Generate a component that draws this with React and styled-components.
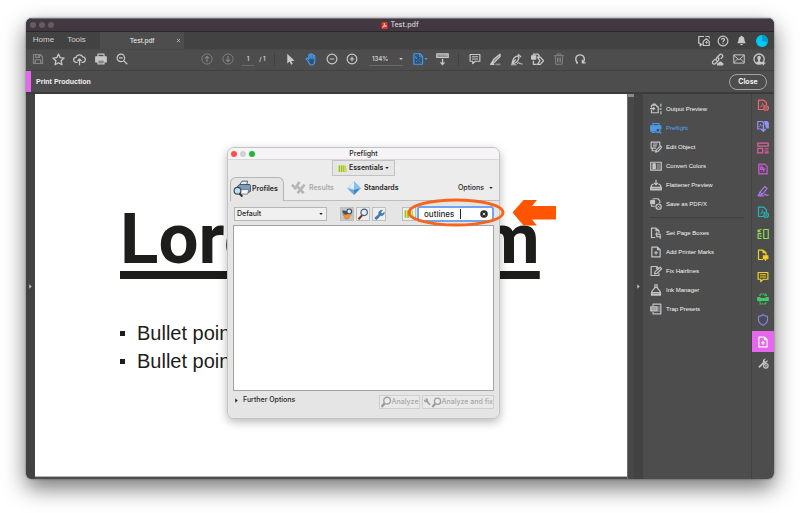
import React from "react";
import styled, { createGlobalStyle, css } from "styled-components";

const GlobalStyle = createGlobalStyle`
  *, *::before, *::after { box-sizing: border-box; }
  body { margin: 0; background: #fff; }
  button, input, select { font: inherit; color: inherit; margin: 0; }
  h1, h2, p, ul { margin: 0; padding: 0; }
`;

const sans = `"Liberation Sans", Arial, sans-serif`;
const ui = `Inter, "Liberation Sans", sans-serif`;

/* ---------- icons ---------- */

const Svg = styled.svg`
  display: block;
  flex: none;
  width: ${(p) => p.$size || 13}px;
  height: ${(p) => p.$size || 13}px;
  fill: none;
  stroke: currentColor;
  stroke-width: 1.6;
  stroke-linejoin: round;
`;

const pdfMark = <path d="M4.5 10.5c2-1 3-4 2.5-5.500c-.5-1 1.500 4 3.500 4c-2-.4-4 .3-6 1.500z" strokeWidth="0.9" />;
const plusBadge = (
  <>
    <circle cx="12.200" cy="12" r="3" />
    <path d="M10.800 12h2.800M12.200 10.600v2.800" strokeWidth="1" />
  </>
);

const shapes = {
  save: <path d="M2 2h9l3 3v9H2zM5 2v4h5V2M4.500 14V9h7v5M8.500 3v2" />,
  star: <path d="M8 1.300l2 4.500 4.900.5-3.700 3.300 1.100 4.900L8 12l-4.300 2.500 1.100-4.900L1.100 6.300 6 5.800z" />,
  cloud: <path d="M5.500 11.500H4a3 3 0 0 1-.3-6A4.500 4.500 0 0 1 12 4.800a3.400 3.400 0 0 1 .5 6.700h-2M8 15V7.500M5.500 9.800L8 7.300l2.500 2.500" />,
  print: (
    <>
      <path d="M4 5V1.500h8V5" />
      <path d="M1 5h14v7h-2.500V9.500h-9V12H1z" fill="currentColor" />
      <path d="M4 10v4.500h8V10M5.500 12h5" />
    </>
  ),
  zoomOut: <><circle cx="6.500" cy="6.500" r="5" /><path d="M10.200 10.200L15 15M4 6.500h5" strokeWidth="1.700" /></>,
  up: <><circle cx="8" cy="8" r="6.800" strokeWidth="1.200" /><path d="M8 12V4.500M5.200 7.200L8 4.400l2.800 2.800" /></>,
  down: <><circle cx="8" cy="8" r="6.800" strokeWidth="1.200" /><path d="M8 4v7.500M5.200 8.800L8 11.600l2.800-2.800" /></>,
  pointer: <path d="M4 1v12l3-2.500 1.800 4 2-1-1.700-3.800L13 9.500z" fill="currentColor" stroke="none" />,
  hand: (
    <path
      d="M4 10.500L1.700 7.800c-.9-1.200.6-2.100 1.500-1.200L4.600 8V3c0-1.400 1.800-1.400 1.800 0v3.500V2c0-1.400 1.900-1.400 1.900 0v4.500V2.500c0-1.400 1.900-1.400 1.900 0v4.500V4c0-1.300 1.900-1.300 1.900 0v5.500c0 3.500-1.500 5.200-4.500 5.200c-2 0-2.700-1.700-3.600-4.200z"
      fill="#2b5580"
      strokeWidth="1.300"
    />
  ),
  minus: <><circle cx="8" cy="8" r="6.500" /><path d="M5 8h6" strokeWidth="1.600" /></>,
  plus: <><circle cx="8" cy="8" r="6.500" /><path d="M5 8h6M8 5v6" strokeWidth="1.600" /></>,
  fitPage: (
    <>
      <path d="M2.500 1h8l3.500 3.500V15H2.500z" fill="#2d4f72" />
      <path d="M10 1v4h4M5 6.500l2 1.500M11 8l-2 .5M5.500 12l2-2M11.500 12.500l-2-1.500M5 4v2.500h2" strokeWidth="1.100" />
    </>
  ),
  ruler: (
    <>
      <path d="M1 1h14v4.500H1z" fill="currentColor" fillOpacity="0.350" />
      <path d="M3.500 1.500V4M6 1.500V4M8.500 1.500V4M11 1.500V4M13 1.500V4" strokeWidth="1" />
      <path d="M8 7v7.500M5.500 11.500L8 14.300l2.500-2.800" />
    </>
  ),
  comment: <path d="M1.500 2h13v9H8.500L5 14.200V11H1.500zM4 5h8M4 8h8" />,
  highlight: (
    <>
      <path d="M13.500 1.500L5.500 8 4.300 11l2.300.5L13.800 4z" fill="currentColor" fillOpacity="0.500" />
      <path d="M4 11l-2 3h4z" fill="currentColor" />
      <path d="M8 14h6" strokeWidth="2" opacity="0.500" />
    </>
  ),
  sign: (
    <>
      <path d="M10 1.500l3.500 3.500M9.500 3.500C5 4.500 4 7 2.500 13c4 0 7-1.500 8.500-7zM2.500 13l4.500-5" />
      <path d="M9 13.500c1.500-3 2-3 2.300 0c1-2 1.500-1 1.700 0h2.500M1 14.500h7" strokeWidth="1.200" />
    </>
  ),
  share: (
    <>
      <path d="M3 3V1.500h5.500L10 3v2.500M3 9.500V14h4" />
      <path d="M8 5h3.500l4 4.500-4 4.500H8l3-4.500z" />
      <path d="M0.800 3.500h5v4h-5z" fill="currentColor" />
    </>
  ),
  trash: <path d="M1.500 3.500h13M5.500 3V1.300h5V3M3 4l.7 11h8.600L13 4M6 6v6.500M8 6v6.500M10 6v6.500" strokeWidth="1.300" />,
  rotate: <path d="M5 13.500C0 9 2.500 2.500 8 2.500s8 6.500 3.500 10.500M11.200 9v4.300h4.300M3 13.500h2" strokeWidth="1.700" />,
  bubbleUp: (
    <>
      <path d="M8 2H1v9h2v3.500L6 11.500" />
      <path d="M7 8.500L11 5l4 3.500v5.500H7z" />
      <path d="M9.500 10.500l2-2 2 2M11.500 8.500V12M10 2h5v3" strokeWidth="1.200" />
    </>
  ),
  help: <><circle cx="8" cy="8" r="6.500" /><path d="M6 6.300c.1-2.600 4-2.400 4 0c0 1.500-2 1.500-2 3.200M8 11v1.400" strokeWidth="1.600" /></>,
  bell: <path d="M8 1c.8 0 1.300.5 1.300 1.200C11.500 3 12.300 5 12.300 7c0 3 1.700 3.500 1.700 5H2c0-1.500 1.700-2 1.700-5c0-2 .8-4 3-4.800C6.700 1.500 7.200 1 8 1zM6 13h4a2 2 0 0 1-4 0z" fill="currentColor" stroke="none" />,
  link: (
    <>
      <path d="M7 9.500c-1-1-1-2.200 0-3.300l3.500-4c2-2 5 .6 3.500 2.800L12 7.300M8.500 5.500c1.500 1 1.500 2.500.5 3.700L5.500 13c-2 1.800-4.600-.5-3.200-2.700L5 7.500" />
      <path d="M8 14.500c0-2 1.500-2 2-2c.5-2 3-1.500 3 0c2 0 2 2 1 2z" fill="currentColor" />
    </>
  ),
  mail: <path d="M1 2.500h14v11H1zM1 3l7 6 7-6M1 13l5-5M15 13l-5-5" strokeWidth="1.300" />,
  user: (
    <>
      <circle cx="7.500" cy="7.500" r="6.300" />
      <path d="M7.500 3.500c2.800 0 2.500 4.200 1 5.500l.3 1.500 2.200 1-1 2H5l-1-2 2.200-1 .3-1.500C5 7.700 4.700 3.500 7.500 3.500z" fill="currentColor" stroke="none" />
      <path d="M12.800 10v5M10.300 12.500h5" strokeWidth="1.700" />
    </>
  ),
  output: (
    <>
      <path d="M2 6V3h7v2h2v8H2V9M4 3V1.500h3V3" />
      <path d="M0 7.500h6M4 5.500l2.200 2L4 9.500M14.500 1v4M14.500 7v2M14.500 11v4M12.500 8h2" />
    </>
  ),
  preflight: (
    <>
      <path d="M4 5V2h8v3" />
      <path d="M1 5h13.500v4H9l-2 3H1z" fill="currentColor" />
      <circle cx="10.500" cy="11" r="2.700" fill="#4d4d4d" />
      <path d="M12.500 13l2.500 2.300M3 12v2h4" />
    </>
  ),
  editObject: <path d="M13 6V1.500H1.500v8H8M4 4h6M4 6.500h5M3 9.500V13h5M7.500 14.800l1-3L14 6.500l1.500 2L10.500 14z" />,
  convert: (
    <>
      <path d="M1 3h14v10.500H1z" />
      <path d="M4 5h3v6.500H4z" fill="currentColor" />
      <path d="M9 4.500h4.500v7.500H9z" fill="currentColor" fillOpacity="0.450" stroke="none" />
    </>
  ),
  flatten: (
    <>
      <path d="M5 7H3l-2 4v3.500h14V11l-2-4h-2M1 11h14M8 1v6.500M5.500 5.200L8 7.700l2.500-2.500" />
      <path d="M1.500 11.500h13v2.500h-13z" fill="currentColor" fillOpacity="0.500" />
    </>
  ),
  savePdf: (
    <>
      <path d="M4 2V1h6.500L13 3.500V7M2 9v2h5M1 3.500h5v4H1z" />
      <path d="M1.500 4h4v3h-4z" fill="currentColor" />
      <circle cx="11.500" cy="11.500" r="3.500" />
      <path d="M10 10l3 3M13 10l-3 3" strokeWidth="1" />
    </>
  ),
  pageBoxes: <path d="M7 14H2V1.500h6L12 5v3M8 1.500V5h4M9 7v6h6M7 9.500h6.500V15.500" />,
  pageAdd: <path d="M2.500 1.500h7.500L13.500 5v9.500h-11zM10 1.500V5h3.500M8 6.500v5M5.500 9h5" />,
  hairlines: <path d="M9 14H1.500V2H9l3 3M9 2v3.500M6 12l1-3.500L14 3l1.500 2-6 6zM12 11v3H9" />,
  ink: (
    <>
      <path d="M6.500 1h3v3.500h-3zM6.500 4.500C6 7 2 8.500 2 11.500V15h12v-3.500C14 8.500 10 7 9.500 4.500" />
      <path d="M2.500 11.500h11V14h-11z" fill="currentColor" fillOpacity="0.500" />
    </>
  ),
  trap: (
    <>
      <path d="M4 4V1.500h10.500v13H4V12" />
      <path d="M1 5h8.500v5.500H1z" fill="currentColor" fillOpacity="0.700" />
      <path d="M12 4v8" strokeWidth="1" />
    </>
  ),
  pdfAdd: <><path d="M9 14H2V1.500h7L12.500 5v3" />{pdfMark}{plusBadge}</>,
  pdfExport: (
    <>
      <path d="M5.500 12H1V2h6l2 2v3" />
      <path d="M2.500 9.500c2-1 2.500-3 2-4.500c.5 2 1.500 3 3 3" strokeWidth="1" />
      <path d="M9.500 2h3.500l2 2v6.500h-3" fill="currentColor" />
      <path d="M8.500 6v8.500M5.500 12l3 3 3-3" strokeWidth="2" />
    </>
  ),
  organize: <path d="M1 1.500h14v4H1zM1 8.500h6.500v6H1zM10 9h5.500M10 12h5.500M10 14.500h5.500" />,
  fileOcr: <path d="M2.500 1.500h8l3 3v10h-11zM5 6h3v2.500H5zM9 11.500V8h2.500M6 11.500h.5M4.500 4h3" />,
  signPen: <path d="M1.500 14.500l2.500-5L10.500 2l3 2.500L7.500 12zM1.500 14.500h8M4 9.500l3 2.500M10 13.500c1-2 2-2 2.300 0h3.200" />,
  compare: <path d="M9 2h6v12H9zM6 7.500H1.500v6.500H6M3.500 10.700H6M1 5l4-3.500M1.500 2v3H5M6 2h1" />,
  protect: (
    <>
      <path d="M8 14H2V1.500h6L12 5v3M8 1.500V5h4" />
      <path d="M8.500 9h6v4h-3v2l-1.500-2H8.500z" fill="currentColor" />
    </>
  ),
  scan: (
    <>
      <path d="M4 4V1.500h5L11 4M10 1.500h2.500v3M4 11v3.500h8V11" strokeDasharray="2 1" />
      <path d="M1 10V6h3v1.500h8V6h3v4z" fill="currentColor" />
    </>
  ),
  shield: <path d="M8 1c2 1.500 4 2 6 2v4.500c0 3.500-3 5.800-6 7.500c-3-1.700-6-4-6-7.500V3c2 0 4-.5 6-2z" />,
  tools: (
    <>
      <path d="M2 12.500L8 7c-1-3 1.500-5.500 4-5L10 4l.5 1.500L12 6l2-2c1 2-1 4.500-3.500 4L4 14c-1 1-3-.5-2-1.500z" fill="currentColor" stroke="none" />
      <circle cx="11.800" cy="11.800" r="3" />
      <path d="M11.800 10.300v3M10.300 11.800h3" strokeWidth="1" />
    </>
  ),
  caret: <path d="M1 4h14l-7 8z" fill="currentColor" stroke="none" />,
  caretRight: <path d="M4 1l8 7-8 7z" fill="currentColor" stroke="none" />,
  close: <path d="M3 3l10 10M13 3L3 13" strokeWidth="2.500" />,
  avatar: (
    <>
      <circle cx="8" cy="8" r="8" fill="#00c8fa" stroke="none" />
      <path d="M8 0a8 8 0 0 1 7.700 10L8 8z" fill="#009fc9" stroke="none" />
    </>
  ),
  acrobat: (
    <>
      <rect x="1" y="0" width="14" height="16" rx="2" fill="#e3322b" stroke="none" />
      <path d="M3.500 12c3-1.500 5-5 4-9c0 4 2 6.500 5 6.500c-3-.5-6 .5-9 2.500z" stroke="#fff" />
    </>
  ),
  library: (
    <g stroke="none">
      <path d="M1 2h3v12H1zM5 2h3v12H5zM9 2h2.500v12H9z" fill="#a0cc10" />
      <path d="M12 3L14 2l1.500 12H13z" fill="#b4d83c" />
    </g>
  ),
  clear: <><circle cx="8" cy="8" r="7.500" fill="#2a2a2a" stroke="none" /><path d="M5.300 5.300l5.400 5.400M10.700 5.300l-5.400 5.400" stroke="#fff" strokeWidth="1.700" /></>,
  profiles: (
    <>
      <path d="M6 4l2-3h5l-1 4" fill="#dceafb" stroke="#45586b" strokeWidth="0.800" />
      <path d="M4 5.500L6 4h9l.7 1.500V10L14 11H5z" fill="#7f9bb8" stroke="#3c4a58" strokeWidth="0.800" />
      <path d="M6 8.500h8l-1 4H6z" fill="#f4f8fc" stroke="#5b6b7a" strokeWidth="0.700" />
      <circle cx="4" cy="9.500" r="3" fill="#b9e0fa" stroke="#444" strokeWidth="1" />
      <path d="M5.800 12l2.500 2.800" stroke="#333" strokeWidth="1.800" />
    </>
  ),
  results: (
    <g stroke="#b5b5b5" strokeWidth="2.800" fill="none">
      <path d="M1 5l3.500 4L9 2" />
      <path d="M7 7l6.500 7M14.500 5L7 14" />
    </g>
  ),
  standards: (
    <g stroke="none">
      <path d="M8 0L0 8l8 2z" fill="#c6e4f8" />
      <path d="M8 0l8 8-8 2z" fill="#86c0ec" />
      <path d="M0 8l8 8v-6z" fill="#6faade" />
      <path d="M16 8l-8 8v-6z" fill="#3f86c4" />
      <path d="M8 1.500L3.500 7 8 8z" fill="#e6f5ff" />
    </g>
  ),
  hands: (
    <>
      <path d="M2 3l5 1 2 4-3 2-4-4z" fill="#414f66" stroke="none" />
      <circle cx="11" cy="4.500" r="3.200" fill="#cfe6fb" stroke="#3a506a" />
      <path d="M2.500 8l4 1 6-1.500L13.500 9 9.500 14.500H6z" fill="#f0943a" stroke="#b2621b" strokeWidth="0.600" />
    </>
  ),
  loupe: (
    <>
      <path d="M7 9.500L2 15" stroke="#7d3328" strokeWidth="2.800" />
      <circle cx="9.500" cy="5.800" r="4.300" fill="#d9effe" stroke="#4a5d70" strokeWidth="1.600" />
    </>
  ),
  wrench: <path d="M1.500 12.500L7 7.500C6 4 9 1 12.500 1.800L10 4.500l.5 1.800 2 .6L15 4.500c.7 3.500-2.500 6-5.500 5L4.500 14.800c-1.500 1.200-4-.9-3-2.300z" fill="#3c7dbb" stroke="#2c5c91" strokeWidth="0.600" />,
  grayLoupe: <><path d="M6.500 9.500L2 14.500" stroke="#9b9b9b" strokeWidth="3" /><circle cx="9.500" cy="6.200" r="4.500" fill="#ececec" stroke="#a0a0a0" strokeWidth="2" /></>,
  grayWrench: <path d="M2 2.500L4.500 5 6 3.500 4.500 1C9-.5 11 3 9.700 6l5 6c1 1.500-1 3-2.300 2L7 8.500C4 9.500 1 6 2 2.500z" fill="#9f9f9f" stroke="none" />,
};

function Icon({ name, size }) {
  return (
    <Svg viewBox="0 0 16 16" $size={size} aria-hidden="true">
      {shapes[name]}
    </Svg>
  );
}

/* ---------- application window ---------- */

const Desktop = styled.div`
  display: flex;
  min-height: 100vh;
  padding: 18px 26px 34px;
  font-family: ${sans};
`;

const AppWindow = styled.div`
  flex: 1;
  min-width: 0;
  display: flex;
  flex-direction: column;
  overflow: hidden;
  border-radius: 6px;
  background: #4d4d4d;
  color: #d0d0d0;
`;

const WindowShadow = styled.div`
  flex: 1;
  min-width: 0;
  display: flex;
  border-radius: 6px;
  box-shadow: 0 9px 22px rgba(0, 0, 0, 0.55), 0 0 2px rgba(0, 0, 0, 0.5);
`;

const TitleBar = styled.header`
  display: grid;
  grid-template-columns: 1fr auto 1fr;
  align-items: center;
  height: 14px;
  padding: 0 4px;
  background: #413841;
  border-top: 1px solid #777277;
  border-bottom: 1px solid #292529;
  font: 600 7px/12px ${ui};
  color: #c6c2c6;
`;

const Lights = styled.div`
  display: flex;
  gap: 3px;
`;

const Light = styled.span`
  width: 6px;
  height: 6px;
  border-radius: 50%;
  background: ${(p) => p.$color};
`;

const DocTitle = styled.div`
  display: flex;
  align-items: center;
  gap: 2px;
`;

const TabBar = styled.nav`
  display: flex;
  height: 17px;
  background: #424242;
  font-size: 8px;
`;

const NavTab = styled.button`
  width: ${(p) => p.$width}px;
  padding: 0 0 2px;
  border: 0;
  background: none;
  text-align: center;
`;

const FileTab = styled.div`
  display: grid;
  grid-template-columns: 1fr auto;
  align-items: center;
  width: 84px;
  margin-left: 8px;
  background: #4d4d4d;
  color: #f0f0f0;
  font-size: 7px;
  text-align: center;
`;

const TabLabel = styled.span`
  padding-left: 12px;
`;

const IconButton = styled.button`
  display: inline-flex;
  align-items: center;
  justify-content: center;
  flex: none;
  width: ${(p) => p.$width || 21}px;
  height: 100%;
  padding: 0;
  border: 0;
  background: none;
  color: ${(p) => (p.$tone === "blue" ? "#4a9bea" : p.$tone === "dim" ? "#858585" : "#c8c8c8")};
`;

const PushRight = styled.div`
  display: flex;
  align-items: center;
  margin-left: auto;
  padding-right: 2px;
`;

const Toolbar = styled.div`
  display: flex;
  align-items: center;
  height: 22px;
  padding: 0 2px 2px 1px;
  border-top: 1px solid #484848;
  border-bottom: 1px solid #424242;
  font: 600 7px/10px ${ui};
`;

const Group = styled.div`
  display: flex;
  align-items: center;
  height: 18px;
  margin-left: ${(p) => p.$gap || 0}px;
`;

const Divider = styled.span`
  width: 1px;
  height: 13px;
  margin: 0 5px;
  background: #414141;
`;

const PageInput = styled.input`
  width: 12px;
  height: 13px;
  margin: 0 2px 0 4px;
  padding: 0;
  border: 0;
  border-bottom: 1px solid #686868;
  background: none;
  font-size: 6px;
  text-align: center;
`;

const PageCount = styled.span`
  width: 13px;
  font-size: 6px;
  text-align: center;
`;

const ZoomField = styled.label`
  display: flex;
  align-items: center;
  width: 34px;
  margin: 0 5px 0 7px;
  padding-left: 3px;
  border-bottom: 1px solid #686868;
  font-size: 6px;
`;

const PlainSelect = styled.select`
  flex: 1;
  min-width: 0;
  height: 13px;
  padding: 0;
  border: 0;
  background: none;
  appearance: none;
  outline: none;
`;

const ToolHeader = styled.div`
  display: flex;
  align-items: center;
  height: 23px;
  padding-right: 7px;
  border-bottom: 2px solid #3b3b3b;
  &::before {
    content: "";
    align-self: stretch;
    width: 5px;
    margin-right: 5px;
    background: #e667ee;
  }
`;

const ToolTitle = styled.h2`
  flex: 1;
  font: bold 7px/10px ${sans};
  color: #f0f0f0;
`;

const CloseButton = styled.button`
  width: 38px;
  height: 16px;
  padding: 0;
  border: 1px solid #a4a4a4;
  border-radius: 8px;
  background: none;
  color: #f0f0f0;
  font: bold 7px/10px ${ui};
`;

const Body = styled.div`
  flex: 1;
  display: flex;
`;

const Gutter = styled.button`
  display: flex;
  align-items: center;
  justify-content: center;
  flex: none;
  width: 9px;
  padding: 0;
  border: 0;
  background: #424242;
  color: #c0c0c0;
`;

const Scrollbar = styled.div`
  flex: none;
  width: 7px;
  background: #474747;
  border-left: 1px solid #6c6c6c;
  &::before {
    content: "";
    display: block;
    height: 3px;
    background: #8c8c8c;
  }
`;

/* ---------- document ---------- */

const Canvas = styled.main`
  position: relative;
  flex: 1;
  min-width: 0;
  margin-bottom: 2px;
  padding: 101px 80px 0 85px;
  background: #fff;
  color: #1d1d1b;
  border-bottom: 1px solid #b5b5b5;
`;

const Headline = styled.h1`
  font: 700 71px/88px Roboto, ${sans};
  white-space: nowrap;
  text-decoration: underline;
  text-decoration-thickness: 8px;
  text-underline-offset: 8px;
  text-decoration-skip-ink: none;
`;

const Bullets = styled.ul`
  margin-top: 36px;
  list-style: none;
  font-size: 20px;
  line-height: 28px;
`;

const Bullet = styled.li`
  display: flex;
  align-items: center;
  gap: 12px;
  &::before {
    content: "";
    width: 5px;
    height: 5px;
    background: currentColor;
  }
`;

/* ---------- side panels ---------- */

const ToolPanel = styled.aside`
  flex: none;
  width: 108px;
  padding: 5px 7px;
`;

const ToolItem = styled.button`
  display: flex;
  align-items: center;
  gap: 4px;
  width: 100%;
  height: 19px;
  padding: 0;
  border: 0;
  background: none;
  color: ${(p) => (p.$active ? "#4fa5f8" : "#f6f6f6")};
  font: 6px/10px ${sans};
  white-space: nowrap;
  svg { color: ${(p) => (p.$active ? "#4a9bea" : "#c4c4c4")}; }
`;

const Rule = styled.hr`
  height: 1px;
  margin: 4px 0 5px;
  border: 0;
  background: #404040;
`;

const Rail = styled.nav`
  flex: none;
  width: 23px;
  border-left: 1px solid #424242;
`;

const RailList = styled.div`
  display: flex;
  flex-direction: column;
  height: 280px;
`;

const RailButton = styled.button`
  flex: 1;
  display: flex;
  align-items: center;
  justify-content: center;
  padding: 0;
  border: 0;
  background: ${(p) => (p.$selected ? "#e667ee" : "none")};
  color: ${(p) => p.$color};
`;

/* ---------- preflight dialog ---------- */

const Dialog = styled.section`
  position: absolute;
  left: 192px;
  top: 53px;
  width: 273px;
  border: 1px solid #c4c4c4;
  border-radius: 7px;
  background: #ececec;
  color: #262626;
  font: 500 7px/10px ${ui};
  box-shadow: 0 3px 10px rgba(0, 0, 0, 0.28);
`;

const DialogTitle = styled.div`
  display: grid;
  grid-template-columns: 1fr auto 1fr;
  align-items: center;
  height: 12px;
  padding: 0 3px;
  border-bottom: 1px solid #d9d7d9;
  border-radius: 6px 6px 0 0;
  background: #f6f4f6;
`;

const LibraryRow = styled.div`
  display: flex;
  justify-content: center;
`;

const LibraryPicker = styled.label`
  display: flex;
  align-items: center;
  gap: 2px;
  width: 63px;
  height: 16px;
  padding: 0 5px;
  border: 1px solid #c2c2c2;
  background: #e6e6e6;
  font-weight: 600;
`;

const Tabs = styled.div`
  display: flex;
  align-items: stretch;
  height: 25px;
  padding: 1px 0 0 2px;
`;

const Tab = styled.button`
  display: flex;
  align-items: center;
  gap: ${(p) => p.$gap || 1}px;
  width: ${(p) => p.$width}px;
  padding: 0 0 2px ${(p) => p.$inset}px;
  border: 0;
  border-bottom: 1px solid #bdbdbd;
  background: none;
  font-weight: 600;
  color: ${(p) => (p.$muted ? "#a9a9a9" : "#262626")};
  ${(p) =>
    p.$active &&
    css`
      border: 1px solid #b5b5b5;
      border-bottom: 0;
      border-radius: 6px 6px 0 0;
      background: #e5e5e5;
    `}
`;

const OptionsButton = styled.button`
  flex: 1;
  display: flex;
  align-items: center;
  justify-content: flex-end;
  gap: 5px;
  padding: 0 6px 2px 0;
  border: 0;
  border-bottom: 1px solid #bdbdbd;
  background: none;
`;

const Panel = styled.div`
  padding: 5px 5px 9px;
  border-radius: 0 0 6px 6px;
  background: #e5e5e5;
`;

const FilterRow = styled.div`
  display: flex;
  align-items: center;
  height: 16px;
`;

const ProfilePicker = styled.label`
  display: flex;
  align-items: center;
  width: 93px;
  height: 14px;
  margin: 0 13px 0 1px;
  padding: 0 3px 0 2px;
  border: 1px solid #b6b6b6;
  background: #f0f0f0;
`;

const SmallButton = styled.button`
  display: flex;
  align-items: center;
  justify-content: center;
  width: 14px;
  height: 14px;
  margin-right: ${(p) => p.$gap || 2}px;
  padding: 0;
  border: 1px solid #bebebe;
  background: ${(p) => (p.$pressed ? "#c6c6c6" : "#eeeeee")};
`;

const SearchBox = styled.div`
  flex: 1;
  display: flex;
  align-items: center;
  min-width: 0;
  height: 16px;
  padding: 0 4px 0 5px;
  border: 2px solid #70a6ee;
  border-radius: 3px;
  background: #fff;
`;

const SearchInput = styled.input`
  width: 31px;
  height: 12px;
  padding: 0;
  border: 0;
  outline: none;
  background: none;
  font-size: 8px;
`;

const Caret = styled.span`
  width: 1px;
  height: 10px;
  margin: 0 auto 0 5px;
  background: #222;
`;

const ClearButton = styled.button`
  padding: 0;
  border: 0;
  background: none;
`;

const ResultList = styled.div`
  height: 166px;
  margin-top: 3px;
  border: 1px solid #a2a2a2;
  background: #fff;
`;

const DialogFooter = styled.div`
  display: flex;
  align-items: flex-start;
  gap: 2px;
  padding-top: 4px;
`;

const Disclosure = styled.button`
  display: flex;
  align-items: center;
  gap: 4px;
  margin-right: auto;
  padding: 0 1px;
  border: 0;
  background: none;
`;

const ActionButton = styled.button`
  display: flex;
  align-items: center;
  justify-content: center;
  height: 14px;
  padding: 0;
  border: 1px solid #cfcfcf;
  background: #e9e9e9;
  white-space: nowrap;
  &:disabled { color: #a8a8a8; }
`;

/* ---------- callout drawn over the dialog ---------- */

const Callout = styled.svg`
  position: absolute;
  left: 372px;
  top: 103px;
  width: 152px;
  height: 32px;
  pointer-events: none;
`;

const toolGroups = [
  [
    ["output", "Output Preview"],
    ["preflight", "Preflight"],
    ["editObject", "Edit Object"],
    ["convert", "Convert Colors"],
    ["flatten", "Flattener Preview"],
    ["savePdf", "Save as PDF/X"],
  ],
  [
    ["pageBoxes", "Set Page Boxes"],
    ["pageAdd", "Add Printer Marks"],
    ["hairlines", "Fix Hairlines"],
    ["ink", "Ink Manager"],
    ["trap", "Trap Presets"],
  ],
];

const railItems = [
  ["pdfAdd", "#f0686e", "Create PDF"],
  ["pdfExport", "#9391f5", "Export PDF"],
  ["organize", "#dd5fa0", "Organize Pages"],
  ["fileOcr", "#d05be0", "Edit PDF"],
  ["signPen", "#a678ea", "Fill and Sign"],
  ["pdfAdd", "#22b8bd", "Combine Files"],
  ["compare", "#8ee052", "Compare Files"],
  ["protect", "#f2cf22", "Send for Comments"],
  ["comment", "#f2cf22", "Comment"],
  ["scan", "#3fca63", "Scan and OCR"],
  ["shield", "#8583ee", "Protect"],
  ["pageAdd", "#ffffff", "Print Production"],
  ["tools", "#c4c4c4", "More Tools"],
];

const Tool = ({ name, label, tone, width, size }) => (
  <IconButton aria-label={label} $tone={tone} $width={width}>
    <Icon name={name} size={size} />
  </IconButton>
);

function MainToolbar() {
  return (
    <Toolbar>
      <Group>
        <Tool name="save" label="Save" tone="dim" size={12} />
        <Tool name="star" label="Star" />
        <Tool name="cloud" label="Upload" />
        <Tool name="print" label="Print" size={12} />
        <Tool name="zoomOut" label="Find" size={12} />
      </Group>
      <Group $gap={64}>
        <Tool name="up" label="Previous page" tone="dim" size={12} />
        <Tool name="down" label="Next page" tone="dim" size={12} />
        <PageInput aria-label="Page number" defaultValue="1" />
        <PageCount>/ 1</PageCount>
        <Divider />
        <Tool name="pointer" label="Select" />
        <Tool name="hand" label="Hand" tone="blue" />
        <Tool name="minus" label="Zoom out" size={12} width={20} />
        <Tool name="plus" label="Zoom in" size={12} width={20} />
        <ZoomField>
          <PlainSelect aria-label="Zoom level" defaultValue="134%">
            <option>134%</option>
          </PlainSelect>
          <Icon name="caret" size={4} />
        </ZoomField>
        <IconButton aria-label="Page display" $tone="blue" $width={24}>
          <Icon name="fitPage" size={12} />
          <Icon name="caret" size={4} />
        </IconButton>
        <Tool name="ruler" label="Show controls" />
        <Divider />
        <Tool name="comment" label="Add comment" size={12} />
        <Tool name="highlight" label="Highlight" />
        <Tool name="sign" label="Sign" />
        <Tool name="share" label="Stamp" />
        <Tool name="trash" label="Delete" tone="dim" size={12} />
        <Tool name="rotate" label="Rotate" size={12} />
      </Group>
      <PushRight>
        <Tool name="link" label="Share link" />
        <Tool name="mail" label="Send by email" size={12} />
        <Tool name="user" label="Invite people" />
      </PushRight>
    </Toolbar>
  );
}

function PreflightDialog() {
  return (
    <Dialog role="dialog" aria-label="Preflight">
      <DialogTitle>
        <Lights>
          <Light $color="#fb5049" />
          <Light $color="#d2d0d2" />
          <Light $color="#1fb73b" />
        </Lights>
        <span>Preflight</span>
      </DialogTitle>
      <LibraryRow>
        <LibraryPicker>
          <Icon name="library" size={9} />
          <PlainSelect aria-label="Library" defaultValue="Essentials">
            <option>Essentials</option>
          </PlainSelect>
          <Icon name="caret" size={4} />
        </LibraryPicker>
      </LibraryRow>
      <Tabs>
        <Tab $active $width={54} $inset={2}>
          <Icon name="profiles" size={18} />
          Profiles
        </Tab>
        <Tab $muted $width={56} $inset={7} $gap={3}>
          <Icon name="results" size={15} />
          Results
        </Tab>
        <Tab $width={62} $inset={7} $gap={3}>
          <Icon name="standards" size={14} />
          Standards
        </Tab>
        <OptionsButton>
          Options <Icon name="caret" size={4} />
        </OptionsButton>
      </Tabs>
      <Panel>
        <FilterRow>
          <ProfilePicker>
            <PlainSelect aria-label="Profile group" defaultValue="Default">
              <option>Default</option>
            </PlainSelect>
            <Icon name="caret" size={4} />
          </ProfilePicker>
          <SmallButton aria-label="Show all" $pressed>
            <Icon name="hands" size={12} />
          </SmallButton>
          <SmallButton aria-label="Show checks">
            <Icon name="loupe" size={12} />
          </SmallButton>
          <SmallButton aria-label="Show fixups" $gap={16}>
            <Icon name="wrench" size={11} />
          </SmallButton>
          <SmallButton aria-label="Search libraries" $gap={1}>
            <Icon name="library" size={10} />
          </SmallButton>
          <SearchBox>
            <SearchInput aria-label="Search" defaultValue="outlines" />
            <Caret />
            <ClearButton aria-label="Clear search">
              <Icon name="clear" size={8} />
            </ClearButton>
          </SearchBox>
        </FilterRow>
        <ResultList />
        <DialogFooter>
          <Disclosure>
            <Icon name="caretRight" size={5} />
            Further Options
          </Disclosure>
          <ActionButton disabled>
            <Icon name="grayLoupe" size={12} />
            Analyze
          </ActionButton>
          <ActionButton disabled>
            <Icon name="grayWrench" size={8} />
            <Icon name="grayLoupe" size={11} />
            Analyze and fix
          </ActionButton>
        </DialogFooter>
      </Panel>
    </Dialog>
  );
}

export default function App() {
  return (
    <Desktop>
      <GlobalStyle />
      <WindowShadow>
        <AppWindow>
          <TitleBar>
            <Lights>
              <Light $color="#635c63" />
              <Light $color="#635c63" />
              <Light $color="#635c63" />
            </Lights>
            <DocTitle>
              <Icon name="acrobat" size={7} />
              Test.pdf
            </DocTitle>
          </TitleBar>
          <TabBar>
            <NavTab $width={35}>Home</NavTab>
            <NavTab $width={31}>Tools</NavTab>
            <FileTab>
              <TabLabel>Test.pdf</TabLabel>
              <IconButton aria-label="Close tab" $width={12}>
                <Icon name="close" size={5} />
              </IconButton>
            </FileTab>
            <PushRight>
              <Tool name="bubbleUp" label="Feedback" width={19} size={12} />
              <Tool name="help" label="Help" width={19} size={12} />
              <Tool name="bell" label="Notifications" width={19} size={11} />
              <Tool name="avatar" label="Account" size={12} />
            </PushRight>
          </TabBar>
          <MainToolbar />
          <ToolHeader>
            <ToolTitle>Print Production</ToolTitle>
            <CloseButton>Close</CloseButton>
          </ToolHeader>
          <Body>
            <Gutter aria-label="Open navigation pane">
              <Icon name="caretRight" size={5} />
            </Gutter>
            <Canvas>
              <Headline>Lorem Ipsum</Headline>
              <Bullets>
                <Bullet>Bullet point</Bullet>
                <Bullet>Bullet point</Bullet>
              </Bullets>
              <PreflightDialog />
              <Callout viewBox="0 0 152 32" aria-hidden="true">
                <ellipse cx="49" cy="15.500" rx="47" ry="12.500" fill="none" stroke="#f8641c" strokeWidth="2.800" />
                <path d="M105.500 15.500l11-12.500h13.500l-5 6h24v13.500h-24l5 6h-13.500z" fill="#ff5500" />
              </Callout>
            </Canvas>
            <Scrollbar />
            <Gutter aria-label="Collapse tools pane">
              <Icon name="caretRight" size={5} />
            </Gutter>
            <ToolPanel>
              {toolGroups.map((group, i) => (
                <React.Fragment key={i}>
                  {i > 0 && <Rule />}
                  {group.map(([icon, label]) => (
                    <ToolItem key={label} $active={icon === "preflight"}>
                      <Icon name={icon} size={12} />
                      {label}
                    </ToolItem>
                  ))}
                </React.Fragment>
              ))}
            </ToolPanel>
            <Rail>
              <RailList>
                {railItems.map(([icon, color, label]) => (
                  <RailButton key={label} aria-label={label} $color={color} $selected={label === "Print Production"}>
                    <Icon name={icon} size={12} />
                  </RailButton>
                ))}
              </RailList>
            </Rail>
          </Body>
        </AppWindow>
      </WindowShadow>
    </Desktop>
  );
}
